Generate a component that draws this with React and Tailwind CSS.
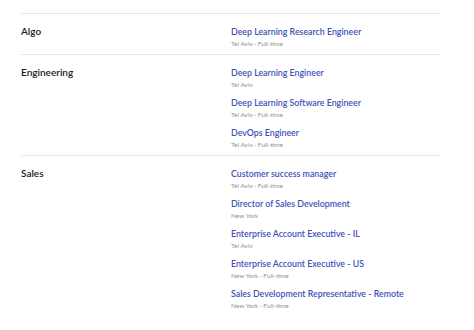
import React from 'react';

const departments = [
  {
    name: 'Algo',
    jobs: [{ title: 'Deep Learning Research Engineer', meta: 'Tel Aviv · Full-time' }],
  },
  {
    name: 'Engineering',
    jobs: [
      { title: 'Deep Learning Engineer', meta: 'Tel Aviv' },
      { title: 'Deep Learning Software Engineer', meta: 'Tel Aviv · Full-time' },
      { title: 'DevOps Engineer', meta: 'Tel Aviv · Full-time' },
    ],
  },
  {
    name: 'Sales',
    jobs: [
      { title: 'Customer success manager', meta: 'Tel Aviv · Full-time' },
      { title: 'Director of Sales Development', meta: 'New York' },
      { title: 'Enterprise Account Executive - IL', meta: 'Tel Aviv' },
      { title: 'Enterprise Account Executive - US', meta: 'New York · Full-time' },
      { title: 'Sales Development Representative - Remote', meta: 'New York · Full-time' },
    ],
  },
];

const App = () => {
  return (
    <div className="min-h-screen bg-white pt-[13px] font-['Lato',sans-serif]">
      <div className="mx-[21px] w-[420px]">
        {departments.map((dept) => (
          <div key={dept.name} className="flex border-t border-[#e6e6e6] pt-[10px]">
            <div className="w-[210px] text-[10px] leading-[15px] font-semibold text-[#1a1a1a]">
              {dept.name}
            </div>
            <div className="flex flex-col">
              {dept.jobs.map((job) => (
                <a key={job.title} href="#" className="block pb-[5px]">
                  <div className="text-[8.8px] leading-[15px] font-semibold text-[#4151b8]">
                    {job.title}
                  </div>
                  <div className="text-[6.5px] leading-[10px] text-[#939393]">{job.meta}</div>
                </a>
              ))}
            </div>
          </div>
        ))}
      </div>
    </div>
  );
};

export default App;
